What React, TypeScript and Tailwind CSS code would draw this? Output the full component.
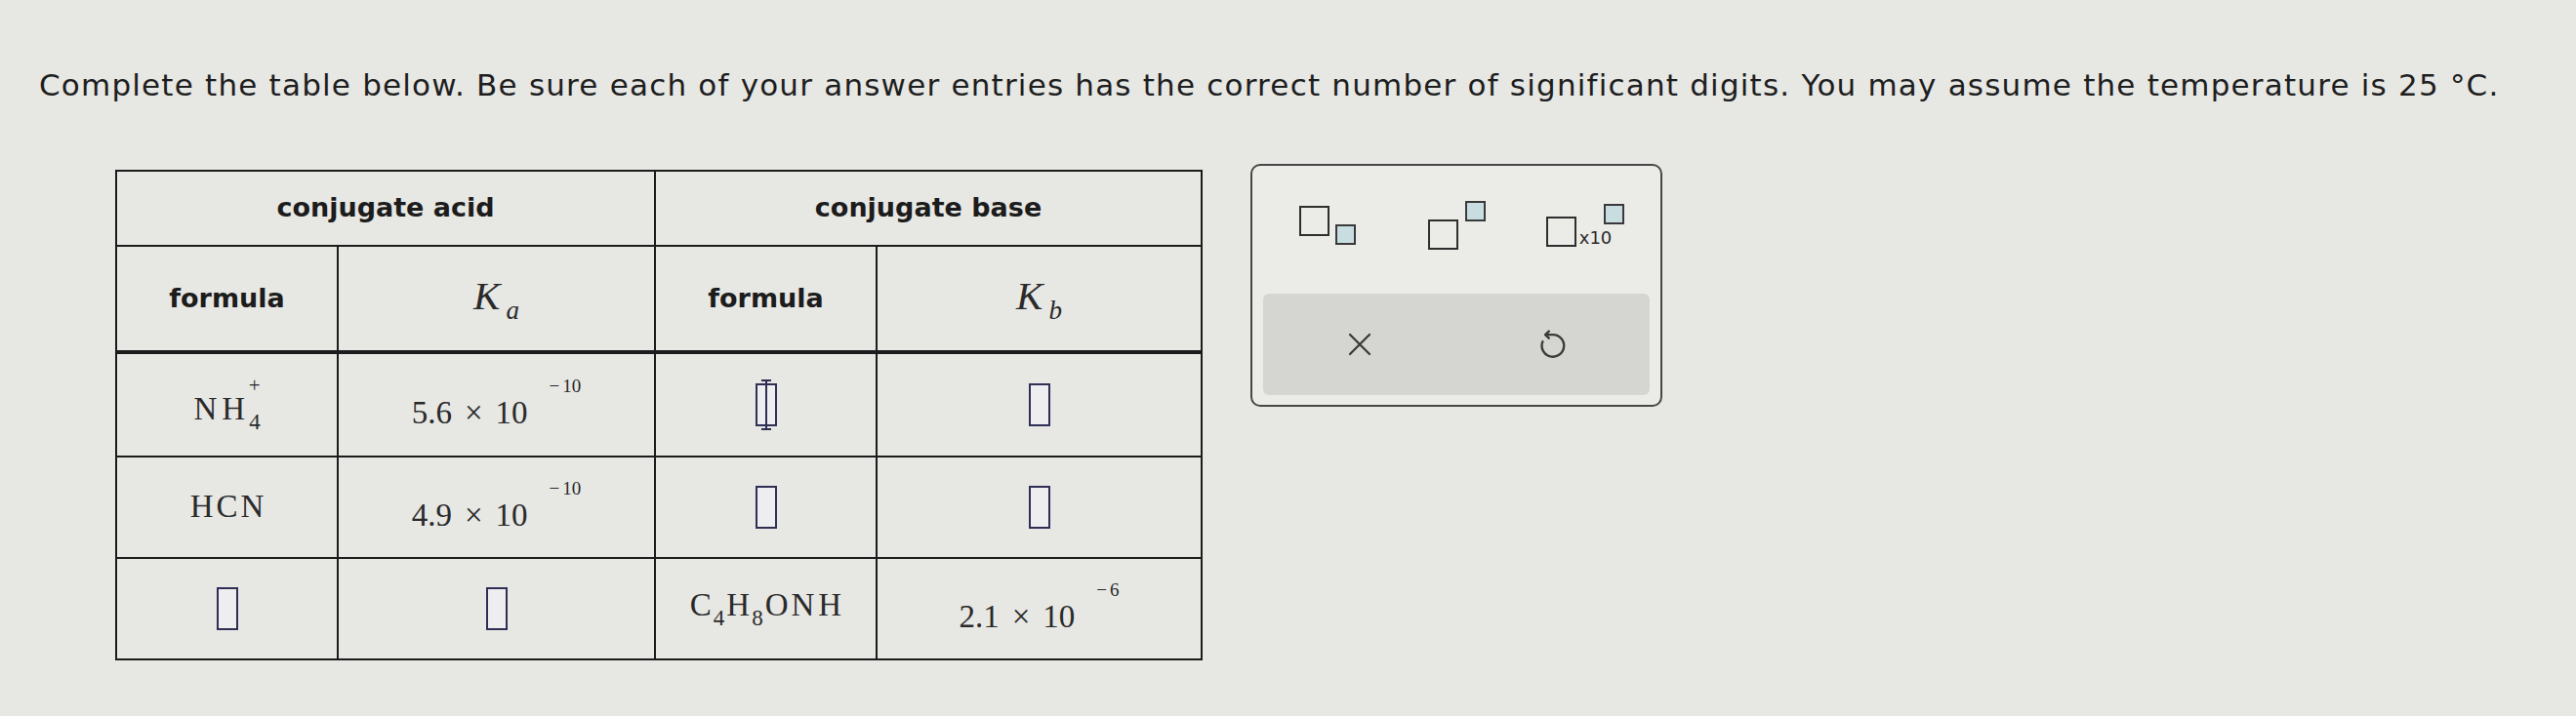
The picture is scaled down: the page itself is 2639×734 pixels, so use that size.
import React from "react";

const serif = "font-['Liberation_Serif','Times_New_Roman',serif]";

function InputBox({ active = false }: { active?: boolean }) {
  return (
    <span className="relative inline-block align-middle w-[22px] h-[44px] border-2 border-[#2f2e55] bg-[#eeeef1]">
      {active && (
        <>
          <span className="absolute left-1/2 -translate-x-1/2 -top-[6px] -bottom-[6px] w-[2px] bg-[#2f2e55]" />
          <span className="absolute left-1/2 -translate-x-1/2 -top-[6px] w-[10px] h-[2px] bg-[#2f2e55]" />
          <span className="absolute left-1/2 -translate-x-1/2 -bottom-[6px] w-[10px] h-[2px] bg-[#2f2e55]" />
        </>
      )}
    </span>
  );
}

function Sci({ mant, exp }: { mant: string; exp: string }) {
  return (
    <span className={`${serif} text-[33px] text-[#2a2a2a] whitespace-nowrap`}>
      {mant}
      <span className="mx-[13px]">×</span>
      10
      <span className="text-[19px] align-[32px] ml-[22px]">
        −<span className="ml-[3px]">{exp}</span>
      </span>
    </span>
  );
}

function Small({ className = "" }: { className?: string }) {
  return <div className={`w-[21px] h-[21px] border-2 border-[#3a3a3a] bg-[#c8dde0] ${className}`} />;
}
function Big({ className = "" }: { className?: string }) {
  return <div className={`w-[31px] h-[31px] border-2 border-[#2e2e2e] bg-[#ebebe8] ${className}`} />;
}

const cell = "border-2 border-[#1c1c1c] text-center align-middle p-0";
const head = "font-['DejaVu_Sans',sans-serif] font-bold text-[27px] text-[#1c1c1c]";

export default function App() {
  return (
    <div className="w-[2639px] h-[734px] overflow-hidden bg-[#e7e7e4] font-['DejaVu_Sans',sans-serif] text-[#1e1e1e]">
      <p className="pl-[40px] pt-[67px] text-[31px] leading-[40px] tracking-[1.2px] whitespace-nowrap">
        Complete the table below. Be sure each of your answer entries has the correct number of significant digits. You may assume the temperature is 25 °C.
      </p>
      <div className="flex items-start pl-[118px] mt-[61px]">
        <table className="table-fixed border-collapse mt-[6px] w-[1112px]">
          <colgroup>
            <col className="w-[227px]" />
            <col className="w-[325px]" />
            <col className="w-[227px]" />
            <col className="w-[333px]" />
          </colgroup>
          <tbody>
            <tr className="h-[77px]">
              <td colSpan={2} className={`${cell} ${head}`}>conjugate acid</td>
              <td colSpan={2} className={`${cell} ${head}`}>conjugate base</td>
            </tr>
            <tr className="h-[109px]">
              <td className={`${cell} ${head} border-b-4`}>formula</td>
              <td className={`${cell} border-b-4`}>
                <span className={`${serif} italic text-[41px] text-[#2a2a2a]`}>
                  K<span className="text-[27px] align-[-10px] ml-[6px]">a</span>
                </span>
              </td>
              <td className={`${cell} ${head} border-b-4`}>formula</td>
              <td className={`${cell} border-b-4`}>
                <span className={`${serif} italic text-[41px] text-[#2a2a2a]`}>
                  K<span className="text-[27px] align-[-10px] ml-[6px]">b</span>
                </span>
              </td>
            </tr>
            <tr className="h-[107px]">
              <td className={cell}>
                <span className={`${serif} text-[33px] text-[#2a2a2a] whitespace-nowrap`}>
                  N<span className="ml-[5px]">H</span>
                  <span className="text-[23px] align-[-10px] ml-[4px]">4</span>
                  <span className="text-[21px] align-[28px] -ml-[12px]">+</span>
                </span>
              </td>
              <td className={cell}>
                <Sci mant="5.6" exp="10" />
              </td>
              <td className={cell}>
                <InputBox active />
              </td>
              <td className={cell}>
                <InputBox />
              </td>
            </tr>
            <tr className="h-[104px]">
              <td className={cell}>
                <span className={`${serif} text-[33px] text-[#2a2a2a] whitespace-nowrap`}>
                  H<span className="ml-[3px]">C</span><span className="ml-[3px]">N</span>
                </span>
              </td>
              <td className={cell}>
                <Sci mant="4.9" exp="10" />
              </td>
              <td className={cell}>
                <InputBox />
              </td>
              <td className={cell}>
                <InputBox />
              </td>
            </tr>
            <tr className="h-[104px]">
              <td className={cell}>
                <InputBox />
              </td>
              <td className={cell}>
                <InputBox />
              </td>
              <td className={cell}>
                <span className={`${serif} text-[33px] text-[#2a2a2a] whitespace-nowrap`}>
                  C<span className="text-[23px] align-[-10px] ml-[2px]">4</span>
                  <span className="ml-[2px]">H</span>
                  <span className="text-[23px] align-[-10px] ml-[2px]">8</span>
                  <span className="ml-[2px]">O</span><span className="ml-[3px]">N</span><span className="ml-[4px]">H</span>
                </span>
              </td>
              <td className={cell}>
                <Sci mant="2.1" exp="6" />
              </td>
            </tr>
          </tbody>
        </table>

        <div className="ml-[49px] w-[422px] h-[249px] rounded-[10px] border-2 border-[#474747] bg-[#ebebe8] px-[11px] pt-[11px] flex flex-col">
          <div className="h-[100px] grid grid-cols-3 place-items-center">
            <div className="flex items-start gap-[6px]">
              <Big />
              <Small className="mt-[19px]" />
            </div>
            <div className="flex items-start gap-[7px]">
              <Big className="mt-[19px]" />
              <Small />
            </div>
            <div className="flex items-start">
              <Big className="mt-[13px]" />
              <span className="mt-[26px] ml-[3px] text-[18px] leading-none text-[#2a2a2a] font-['DejaVu_Sans',sans-serif]">x10</span>
              <Small className="-ml-[8px]" />
            </div>
          </div>
          <div className="mt-[20px] h-[104px] rounded-[6px] bg-[#d5d5d2] grid grid-cols-2 place-items-center">
            <svg width="30" height="30" viewBox="0 0 24 24" fill="none" stroke="#3a3a3a" strokeWidth="1.8" strokeLinecap="round">
              <path d="M4 4 L20 20 M20 4 L4 20" />
            </svg>
            <svg width="34" height="34" viewBox="0 0 24 24" fill="none" stroke="#3a3a3a" strokeWidth="1.7" strokeLinecap="round" strokeLinejoin="round">
              <path d="M9 2.5 L6.5 5 L9 7.5" />
              <path d="M6.5 5 H12 A8 8 0 1 1 4.5 10" />
            </svg>
          </div>
        </div>
      </div>
    </div>
  );
}
